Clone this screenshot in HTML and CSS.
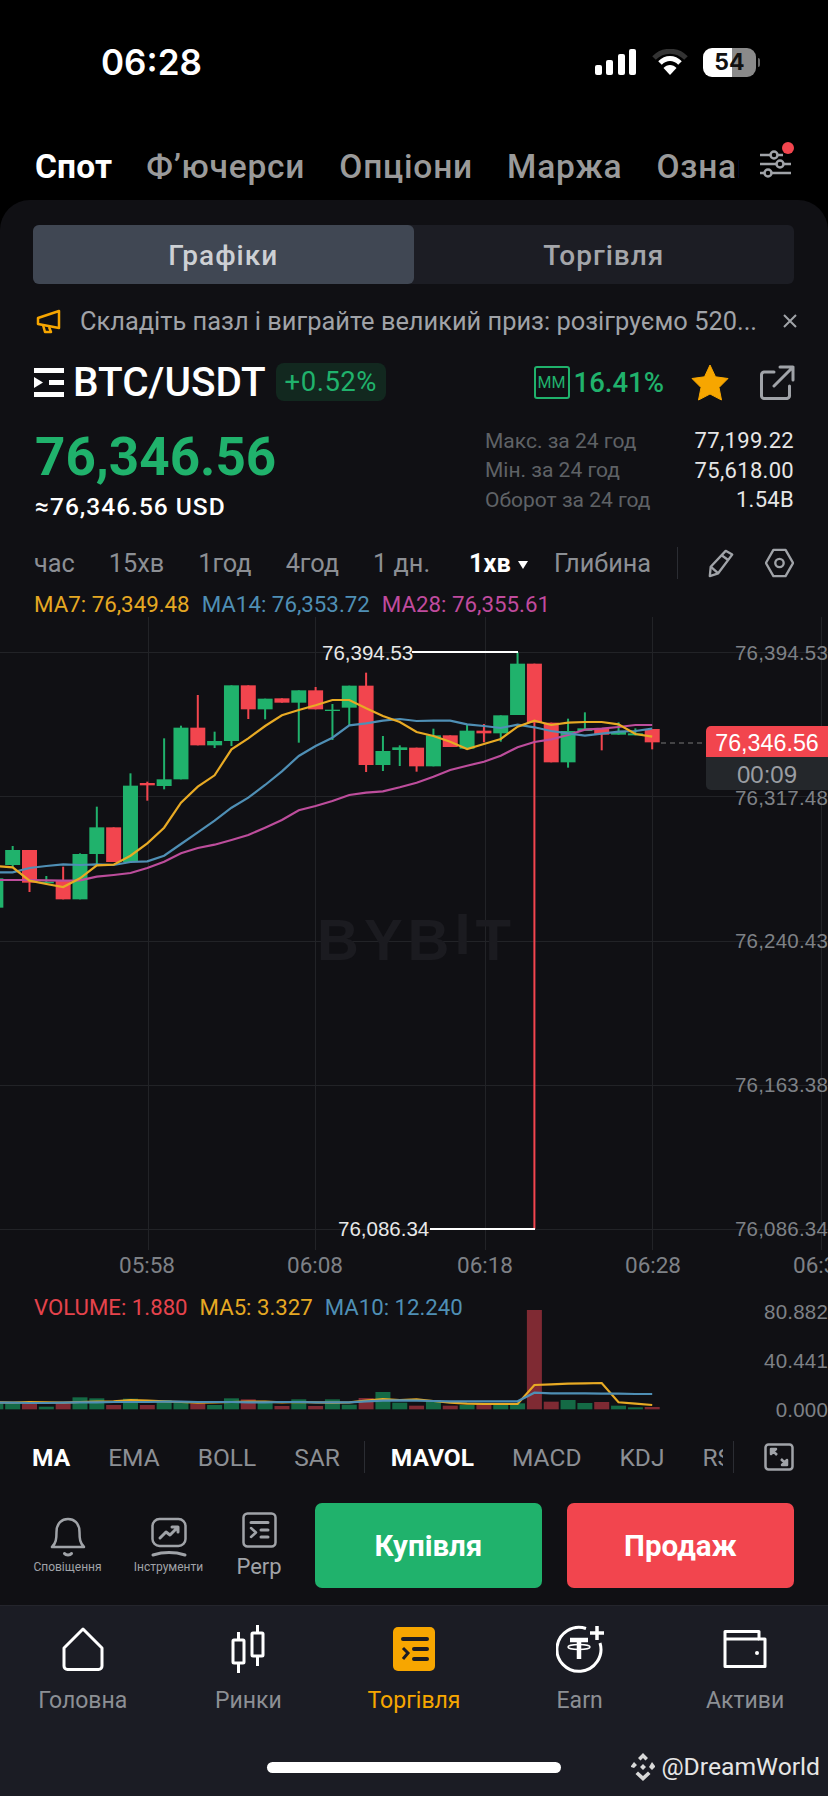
FILE: index.html
```html
<!DOCTYPE html>
<html lang="uk">
  <head>
    <meta charset="UTF-8" />
    <title>BTC/USDT</title>
    <link rel="stylesheet" href="styles.css">
  </head>
  <body>
    <div class="status-bar">
      <span class="clock">06:28</span>
      <div class="status-icons">
        <svg width="42" height="26" viewBox="0 0 42 26" fill="#fff"><rect x="0" y="16" width="7" height="10" rx="2"/><rect x="11" y="11" width="7" height="15" rx="2"/><rect x="23" y="5" width="7" height="21" rx="2"/><rect x="34" y="0" width="7" height="26" rx="2"/></svg>
        <svg width="36" height="26" viewBox="0 0 36 26"><path d="M2 9C11 0 25 0 34 9" fill="none" stroke="#333" stroke-width="5"/><path d="M8 14C14 8 22 8 28 14" fill="none" stroke="#fff" stroke-width="5"/><path d="M18 26L11.500 19C15 15 21 15 24.500 19Z" fill="#fff"/></svg>
        <div class="battery"><span class="battery-num">54</span></div>
      </div>
    </div>

    <div class="top-tabs">
      <div class="top-tabs-list">
        <span class="top-tab active">Спот</span>
        <span class="top-tab">Ф’ючерси</span>
        <span class="top-tab">Опціони</span>
        <span class="top-tab">Маржа</span>
        <span class="top-tab">Ознайомитись</span>
      </div>
      <div class="filter-btn">
        <svg width="33" height="30" viewBox="0 0 33 30" fill="none" stroke="#a0a3a8" stroke-width="2.500"><path d="M1 7H11M19 7H24M1 16H17M25 16H32M1 25H5M13 25H32"/><circle cx="15" cy="7" r="3.500"/><circle cx="21" cy="16" r="3.500"/><circle cx="9" cy="25" r="3.500"/></svg>
        <span class="filter-dot"></span>
      </div>
    </div>

    <div class="panel">
      <div class="segment">
        <div class="segment-item active">Графіки</div>
        <div class="segment-item">Торгівля</div>
      </div>

      <div class="notice">
        <svg width="26" height="25" viewBox="0 0 26 25" fill="none" stroke="#f7a600" stroke-width="2.500" stroke-linejoin="round"><path d="M2 9L23 2V19L2 15Z"/><path d="M7 16L9 23H15L13 18"/></svg>
        <span class="notice-text">Складіть пазл і виграйте великий приз: розігруємо 520...</span>
        <svg class="notice-close" width="14" height="14" viewBox="0 0 14 14" stroke="#a0a3a8" stroke-width="2"><path d="M1 1L13 13M13 1L1 13"/></svg>
      </div>

      <div class="symbol-row">
        <svg width="30" height="29" viewBox="0 0 30 29" fill="#fff"><rect width="30" height="5"/><rect y="24" width="30" height="5"/><rect x="15" y="12" width="15" height="5"/><path d="M0 9L9 14.500L0 20Z"/></svg>
        <span class="symbol-name">BTC/USDT</span>
        <span class="change-badge">+0.52%</span>
        <span class="mm-box">MM</span>
        <span class="mm-value">16.41%</span>
        <svg class="star" width="38" height="37" viewBox="0 0 38 37"><path d="M19 1L24.500 12.800L37 14.500L28 23.500L30.500 36L19 30L7.500 36L10 23.500L1 14.500L13.500 12.800Z" fill="#f7a600" stroke="#f7a600" stroke-linejoin="round"/></svg>
        <svg width="35" height="35" viewBox="0 0 35 35" fill="none" stroke="#a0a3a8" stroke-width="3" stroke-linecap="round" stroke-linejoin="round"><path d="M14 7H4A3 3 0 0 0 1.500 10V30A3 3 0 0 0 4 33.500H26A3 3 0 0 0 29.500 30V21"/><path d="M14 21L33 2M20 2H33V15"/></svg>
      </div>

      <div class="price-row">
        <div>
          <div class="price">76,346.56</div>
          <div class="price-usd">≈76,346.56 USD</div>
        </div>
        <div class="stats">
          <div class="stat"><span class="stat-label">Макс. за 24 год</span><span class="stat-value">77,199.22</span></div>
          <div class="stat"><span class="stat-label">Мін. за 24 год</span><span class="stat-value">75,618.00</span></div>
          <div class="stat"><span class="stat-label">Оборот за 24 год</span><span class="stat-value">1.54B</span></div>
        </div>
      </div>

      <div class="time-tabs">
        <span class="time-tab">час</span>
        <span class="time-tab">15хв</span>
        <span class="time-tab">1год</span>
        <span class="time-tab">4год</span>
        <span class="time-tab">1 дн.</span>
        <span class="time-tab active">1хв <i class="caret"></i></span>
        <span class="time-tab">Глибина</span>
        <span class="divider"></span>
        <svg width="30" height="32" viewBox="0 0 30 32" fill="none" stroke="#a0a3a8" stroke-width="2.500" stroke-linejoin="round"><path d="M20 3L27 7L12 27L3 30L4 20Z"/><path d="M16 8L23 13M4 20L12 27"/></svg>
        <svg class="hex" width="31" height="32" viewBox="0 0 31 32" fill="none" stroke="#a0a3a8" stroke-width="2.500" stroke-linejoin="round"><path d="M9 2H22L30 16L22 30H9L1 16Z"/><circle cx="15.500" cy="16" r="4.500"/></svg>
      </div>

      <div class="ma-legend">
        <span class="ma-yellow">MA7: 76,349.48</span>
        <span class="ma-blue">MA14: 76,353.72</span>
        <span class="ma-pink">MA28: 76,355.61</span>
      </div>

      <svg class="chart" id="chart" width="828" height="809" viewBox="0 0 828 809">
        <g id="grid"></g>
        <text class="watermark" x="317" y="343">BYB<tspan dy="-6">I</tspan><tspan dy="6">T</tspan></text>
        <g id="candles"></g>
        <g id="lines"></g>

        <text class="axis" x="828" y="43" text-anchor="end">76,394.53</text>
        <text class="axis" x="828" y="188" text-anchor="end">76,317.48</text>
        <text class="axis" x="828" y="331" text-anchor="end">76,240.43</text>
        <text class="axis" x="828" y="475" text-anchor="end">76,163.38</text>
        <text class="axis" x="828" y="619" text-anchor="end">76,086.34</text>

        <text class="peak" x="322" y="43">76,394.53</text>
        <rect x="412" y="34" width="106" height="2" fill="#fff"/>
        <text class="peak" x="338" y="619">76,086.34</text>
        <rect x="430" y="611" width="105" height="2" fill="#fff"/>

        <path d="M661 126H706" stroke="#777" stroke-dasharray="5 4"/>
        <path d="M706 114H828V140H706Z" fill="#f2454e"/>
        <rect x="706" y="109" width="130" height="32" rx="5" fill="#f2454e"/>
        <path d="M706 140H828V173H711A5 5 0 0 1 706 168Z" fill="#24272b"/>
        <text class="tag" x="767" y="134" text-anchor="middle">76,346.56</text>
        <text class="tag-time" x="767" y="166" text-anchor="middle">00:09</text>

        <text class="time-label" x="147" y="656" text-anchor="middle">05:58</text>
        <text class="time-label" x="315" y="656" text-anchor="middle">06:08</text>
        <text class="time-label" x="485" y="656" text-anchor="middle">06:18</text>
        <text class="time-label" x="653" y="656" text-anchor="middle">06:28</text>
        <text class="time-label" x="821" y="656" text-anchor="middle">06:38</text>

        <text class="vol-legend" x="34" y="698"><tspan fill="#e5434c">VOLUME: 1.880</tspan><tspan dx="12" fill="#e5a823">MA5: 3.327</tspan><tspan dx="12" fill="#4f8fb5">MA10: 12.240</tspan></text>
        <text class="axis" x="828" y="702" text-anchor="end">80.882</text>
        <text class="axis" x="828" y="751" text-anchor="end">40.441</text>
        <text class="axis" x="828" y="800" text-anchor="end">0.000</text>
      </svg>

      <div class="indicators">
        <div class="ind-group">
          <span class="ind active">MA</span>
          <span class="ind">EMA</span>
          <span class="ind">BOLL</span>
          <span class="ind">SAR</span>
        </div>
        <span class="divider"></span>
        <div class="ind-group ind-scroll">
          <span class="ind active">MAVOL</span>
          <span class="ind">MACD</span>
          <span class="ind">KDJ</span>
          <span class="ind">RSI</span>
        </div>
        <span class="divider"></span>
        <svg class="expand" width="30" height="28" viewBox="0 0 30 28" fill="none" stroke="#a0a3a8" stroke-width="2.500" stroke-linejoin="round"><rect x="1.500" y="1.500" width="27" height="25" rx="3"/><path d="M7 6H12L7 11ZM7 6L13 12M23 22H18L23 17ZM23 22L17 16"/></svg>
      </div>

      <div class="actions">
        <div class="action">
          <svg width="36" height="40" viewBox="0 0 36 40" fill="none" stroke="#a0a3a8" stroke-width="2.500" stroke-linecap="round" stroke-linejoin="round"><path d="M2 30H34C30 26 29.500 22 29.500 15C29.500 6 24 2 18 2S6.500 6 6.500 15C6.500 22 6 26 2 30Z"/><path d="M14.500 36.500C16 38.500 20 38.500 21.500 36.500" stroke-width="3"/></svg>
          <span class="action-label">Сповіщення</span>
        </div>
        <div class="action">
          <svg width="36" height="40" viewBox="0 0 36 40" fill="none" stroke="#a0a3a8" stroke-width="2.500" stroke-linecap="round" stroke-linejoin="round"><rect x="1.500" y="2" width="33" height="27" rx="7"/><path d="M9 21L15 15L19 18L26 11M21 10H27V15" stroke-width="3"/><path d="M2 38C12 35 24 35 34 38" stroke-width="3"/></svg>
          <span class="action-label">Інструменти</span>
        </div>
        <div class="action action-perp">
          <svg width="35" height="36" viewBox="0 0 35 36" fill="none" stroke="#a0a3a8" stroke-width="2.500" stroke-linecap="round" stroke-linejoin="round"><rect x="1.500" y="1.500" width="32" height="33" rx="4"/><path d="M9 10.500H26M19 18H26M19 25H26" stroke-width="3"/><path d="M9 16L14 20.500L9 25" stroke-width="2.500"/></svg>
          <span class="perp-label">Perp</span>
        </div>
        <div class="trade-btn buy">Купівля</div>
        <div class="trade-btn sell">Продаж</div>
      </div>
    </div>

    <nav class="bottom-nav">
      <div class="nav-item">
        <svg width="44" height="46" viewBox="0 0 44 46" fill="none" stroke="#fff" stroke-width="3" stroke-linejoin="round"><path d="M22 3L41 22V40A3.500 3.500 0 0 1 37.500 43.500H6.500A3.500 3.500 0 0 1 3 40V22Z"/></svg>
        <span>Головна</span>
      </div>
      <div class="nav-item">
        <svg width="44" height="50" viewBox="0 0 34 50" fill="none" stroke="#fff" stroke-width="3" stroke-linejoin="round"><rect x="2" y="16" width="11" height="23" rx="1"/><rect x="21" y="9" width="11" height="23" rx="1"/><path d="M7.500 8V16M7.500 39V49M26.500 1V9M26.500 32V42"/></svg>
        <span>Ринки</span>
      </div>
      <div class="nav-item active">
        <svg width="42" height="44" viewBox="0 0 42 44"><rect width="42" height="44" rx="5" fill="#f7a600"/><path d="M10 12H34M21 22H34M21 32H34" stroke="#1b1c24" stroke-width="4" stroke-linecap="round"/><path d="M10 21L15 26L10 32" fill="none" stroke="#1b1c24" stroke-width="3"/></svg>
        <span>Торгівля</span>
      </div>
      <div class="nav-item">
        <svg width="48" height="48" viewBox="0 0 48 48" fill="none" stroke="#fff" stroke-width="3"><path d="M30 3.500A22 22 0 1 0 44 18"/><path d="M14 15H32M23 15V34" stroke-width="4.500"/><ellipse cx="23" cy="22" rx="11" ry="2.500" stroke-width="1.500"/><path d="M41 1V15M34 8H48" stroke-width="3.500"/></svg>
        <span>Earn</span>
      </div>
      <div class="nav-item">
        <svg width="44" height="40" viewBox="0 0 44 40" fill="none" stroke="#fff" stroke-width="3" stroke-linejoin="round"><path d="M2 10V37.500H42V10H36V2.500H2Z"/><path d="M2 10H36"/><circle cx="34" cy="24" r="2" fill="#fff" stroke="none"/></svg>
        <span>Активи</span>
      </div>
    </nav>

    <div class="home-area">
      <div class="home-indicator"></div>
      <div class="credit">
        <svg width="28" height="28" viewBox="0 0 28 28" fill="#d8d8d8"><path d="M14 0L19 5L16.500 7.500L14 5L11.500 7.500L9 5ZM5 9L8 12L5 15L2 14V13ZM23 9L26 13V14L23 17L20 14ZM14 11L17 14L14 17L11 14ZM9 18.500L14 23L19 18.500L21.500 21L14 28L6.500 21Z"/></svg>
        <span>@DreamWorld</span>
      </div>
    </div>

    <script src="chart.js"></script>
  </body>
</html>
```

FILE: styles.css
```css
* {
  box-sizing: border-box;
}
html,
body {
  margin: 0;
  background: #000;
}
body {
  width: 828px;
  height: 1796px;
  overflow: hidden;
  font-family: Roboto, "Noto Sans", sans-serif;
  color: #fff;
  display: flex;
  flex-direction: column;
}

/* status bar */
.status-bar {
  height: 124px;
  display: flex;
  justify-content: space-between;
  align-items: center;
  padding: 0 72px 0 101px;
}
.clock {
  font-family: Inter, sans-serif;
  font-size: 35px;
  font-weight: 600;
}
.status-icons {
  display: flex;
  align-items: center;
  gap: 15px;
}
.battery {
  width: 53px;
  height: 29px;
  border-radius: 9px;
  background: linear-gradient(to right, #fff 54%, #8a8a8a 54%);
  color: #111;
  text-align: center;
  font-family: Inter, sans-serif;
  font-weight: 700;
  font-size: 23px;
  line-height: 29px;
  position: relative;
}
.battery::after {
  content: "";
  position: absolute;
  right: -4px;
  top: 10px;
  width: 2px;
  height: 9px;
  border-radius: 0 2px 2px 0;
  background: #666;
}

/* top tabs */
.top-tabs {
  height: 76px;
  display: flex;
  align-items: center;
  padding: 8px 36px 0 35px;
}
.top-tabs-list {
  width: 705px;
  display: flex;
  gap: 34px;
  overflow: hidden;
}
.top-tab {
  font-size: 33.500px;
  letter-spacing: 0.800px;
  font-weight: 500;
  color: #9a9a9a;
  white-space: nowrap;
}
.top-tab.active {
  color: #fff;
  font-weight: 700;
  letter-spacing: 0.200px;
}
.filter-btn {
  margin: -6px 0 0 20px;
  position: relative;
  height: 30px;
}
.filter-dot {
  position: absolute;
  top: -6px;
  right: -2px;
  width: 12px;
  height: 12px;
  border-radius: 50%;
  background: #f2454e;
}

/* panel */
.panel {
  height: 1405px;
  background: #101014;
  border-radius: 30px 30px 0 0;
  padding-top: 25px;
}
.segment {
  height: 59px;
  margin: 0 34px 0 33px;
  display: flex;
  background: #1c1d24;
  border-radius: 6px;
}
.segment-item {
  flex: 1;
  display: flex;
  align-items: center;
  justify-content: center;
  padding-top: 2px;
  font-size: 28px;
  letter-spacing: 1px;
  font-weight: 500;
  color: #a4a6aa;
  border-radius: 6px;
}
.segment-item.active {
  background: #404753;
  color: #cdd0d4;
}
.notice {
  height: 74px;
  padding: 0 31px 0 36px;
  display: flex;
  align-items: center;
}
.notice-text {
  margin-left: 18px;
  font-size: 25.400px;
  color: #a0a3a8;
  white-space: nowrap;
}
.notice-close {
  margin-left: auto;
}
.symbol-row {
  height: 48px;
  padding: 0 33px 0 34px;
  display: flex;
  align-items: center;
}
.symbol-name {
  margin-left: 9px;
  font-size: 40.500px;
  font-weight: 500;
}
.change-badge {
  margin-left: 10px;
  height: 38px;
  padding: 0 9px;
  border-radius: 8px;
  background: #12281f;
  color: #20b26c;
  font-size: 27.500px;
  letter-spacing: 0.500px;
  line-height: 38px;
}
.mm-box {
  margin-left: auto;
  width: 36px;
  height: 33px;
  border: 2px solid #20b26c;
  border-radius: 3px;
  color: #20b26c;
  font-size: 16px;
  text-align: center;
  line-height: 29px;
}
.mm-value {
  margin-left: 4px;
  color: #20b26c;
  font-size: 27.500px;
  font-weight: 500;
}
.star {
  margin-left: 27px;
  margin-right: 31px;
}
.price-row {
  height: 132px;
  padding: 20px 34px 0 35px;
  display: flex;
  justify-content: space-between;
}
.price {
  color: #20b26c;
  font-size: 53px;
  font-weight: 700;
  line-height: 62px;
}
.price-usd {
  margin-top: 4px;
  font-size: 24.500px;
  letter-spacing: 1px;
  font-weight: 500;
}
.stats {
  width: 309px;
  font-size: 21px;
  color: #e6e6e6;
}
.stat {
  height: 29.500px;
  display: flex;
  justify-content: space-between;
  align-items: center;
}
.stat-label {
  color: #5f6266;
}
.stat-value {
  font-size: 22px;
  letter-spacing: 0.300px;
}
.time-tabs {
  height: 50px;
  padding: 0 34px;
  display: flex;
  align-items: center;
  gap: 34px;
}
.time-tab {
  font-size: 25.300px;
  color: #8c8f94;
  white-space: nowrap;
}
.time-tab.active {
  margin: 0 -8px 0 5px;
  color: #fff;
  font-weight: 700;
}
.caret {
  display: inline-block;
  margin-left: 1px;
  vertical-align: 3px;
  border: 5.500px solid transparent;
  border-top: 8px solid #fff;
  border-bottom: 0;
}
.divider {
  width: 1px;
  height: 32px;
  background: #2b2d33;
}
.time-tabs .divider {
  margin: 0 -5px 0 -8px;
}
.hex {
  margin-left: -4px;
}
.ma-legend {
  height: 29px;
  padding: 3px 0 0 34px;
  display: flex;
  gap: 12px;
  align-items: center;
  font-size: 22.300px;
}
.ma-yellow {
  color: #e5a823;
}
.ma-blue {
  color: #4f8fb5;
}
.ma-pink {
  color: #c04b9e;
}

/* chart */
.chart {
  display: block;
}
.chart text {
  font-family: "Liberation Sans", sans-serif;
}
.chart .axis {
  font-size: 20.500px;
  letter-spacing: 0.200px;
  fill: #7e8186;
}
.chart .peak {
  font-size: 20.500px;
  fill: #e8e8e8;
}
.chart .time-label {
  font-family: Roboto, sans-serif;
  font-size: 22.500px;
  fill: #7e8186;
}
.chart .tag {
  font-size: 23.300px;
  fill: #fff;
}
.chart .tag-time {
  font-size: 24px;
  fill: #9a9da2;
}
.chart .watermark {
  font-size: 58px;
  font-weight: 700;
  letter-spacing: 5px;
  fill: #1b1b20;
}
.chart .vol-legend {
  font-family: Roboto, sans-serif;
  font-size: 22.200px;
}

/* indicators */
.indicators {
  height: 62px;
  padding-left: 32px;
  display: flex;
  align-items: center;
}
.ind-group {
  display: flex;
  gap: 38px;
  margin-right: 24px;
}
.ind-scroll {
  width: 332px;
  margin: 0 10px 0 26px;
  overflow: hidden;
}
.ind {
  font-size: 24.500px;
  color: #8c8f94;
}
.ind.active {
  color: #fff;
  font-weight: 700;
}
.expand {
  margin-left: 30px;
}

/* actions */
.actions {
  height: 115px;
  padding: 15px 34px 15px 0;
  display: flex;
  align-items: center;
}
.action {
  width: 101px;
  display: flex;
  flex-direction: column;
  align-items: center;
  gap: 3px;
}
.action-label {
  font-size: 12px;
  color: #a0a3a8;
  white-space: nowrap;
}
.action:first-child {
  margin-left: 17px;
}
.action-perp {
  width: 80px;
  gap: 6px;
}
.perp-label {
  font-size: 22px;
  color: #a0a3a8;
}
.trade-btn {
  width: 227px;
  height: 85px;
  border-radius: 7px;
  display: flex;
  align-items: center;
  justify-content: center;
  font-size: 29.500px;
  font-weight: 700;
}
.buy {
  background: #20b26c;
  margin-left: 16px;
}
.sell {
  background: #f2454e;
  margin-left: 25px;
}

/* bottom nav */
.bottom-nav {
  height: 135px;
  background: #1b1c24;
  border-top: 1px solid #24252c;
  padding-top: 18px;
  display: grid;
  grid-template-columns: repeat(5, 1fr);
}
.nav-item {
  display: flex;
  flex-direction: column;
  align-items: center;
  font-size: 23px;
  color: #8c8f94;
}
.nav-item svg {
  height: 50px;
  margin-bottom: 13px;
}
.nav-item.active {
  color: #f7a600;
}
.home-area {
  height: 56px;
  background: #1b1c24;
  position: relative;
}
.home-indicator {
  position: absolute;
  left: 267px;
  top: 22px;
  width: 294px;
  height: 11px;
  border-radius: 6px;
  background: #fff;
}
.credit {
  position: absolute;
  right: 8px;
  top: 12px;
  display: flex;
  align-items: center;
  gap: 4px;
  font-size: 24.700px;
  color: #e6e6e6;
}
```

FILE: chart.js
```js
// values are read off the screen: y is in px *3 from the top of the plot area
const SVG_NS = "http://www.w3.org/2000/svg";
const STEP = 16.83;
const X0 = 12.67;
const GREEN = "#20b26c";
const RED = "#f2454e";

// [colour, body top, body bottom, wick top, wick bottom]
const candles = [
  ["g", 745, 833, 745, 833],
  ["g", 660, 705, 648, 712],
  ["r", 660, 758, 660, 786],
  ["g", 755, 760, 738, 760],
  ["r", 750, 808, 710, 808],
  ["g", 672, 808, 670, 808],
  ["g", 592, 672, 530, 705],
  ["r", 592, 696, 592, 696],
  ["g", 467, 696, 430, 696],
  ["r", 459, 466, 455, 512],
  ["g", 448, 468, 325, 478],
  ["g", 293, 448, 287, 448],
  ["r", 293, 346, 195, 346],
  ["g", 333, 346, 305, 354],
  ["g", 166, 333, 166, 348],
  ["r", 166, 238, 166, 267],
  ["g", 206, 238, 206, 268],
  ["r", 205, 218, 205, 218],
  ["g", 181, 218, 181, 338],
  ["r", 181, 238, 171, 238],
  ["g", 239, 243, 222, 330],
  ["g", 167, 233, 167, 285],
  ["r", 167, 405, 128, 426],
  ["g", 363, 405, 318, 423],
  ["g", 352, 360, 346, 408],
  ["r", 353, 409, 353, 425],
  ["g", 316, 409, 296, 409],
  ["r", 316, 351, 316, 351],
  ["g", 302, 356, 285, 356],
  ["r", 302, 310, 282, 337],
  ["g", 256, 310, 256, 335],
  ["g", 101, 255, 67, 255],
  ["r", 101, 278, 101, 1797],
  ["r", 278, 397, 278, 397],
  ["g", 303, 397, 266, 413],
  ["g", 295, 303, 247, 303],
  ["r", 296, 314, 296, 361],
  ["g", 306, 314, 277, 314],
  ["g", 310, 316, 295, 316],
  ["r", 297, 337, 297, 358],
];

const ma7 = [708, 712, 752, 762, 771, 745, 706, 704, 677, 640, 593, 518, 470, 436, 358, 325, 288, 256, 240, 226, 210, 210, 235, 258, 276, 306, 318, 335, 357, 342, 327, 290, 272, 285, 278, 276, 276, 283, 312, 320];
const ma14 = [727, 727, 714, 708, 703, 705, 703, 705, 696, 694, 677, 642, 607, 572, 533, 503, 465, 424, 378, 348, 323, 286, 280, 272, 267, 273, 272, 272, 283, 288, 294, 284, 292, 303, 310, 317, 311, 305, 303, 296];
const ma28 = [750, 750, 750, 751, 752, 751, 740, 735, 729, 714, 695, 670, 654, 644, 630, 615, 593, 570, 541, 528, 513, 495, 488, 484, 472, 458, 440, 420, 407, 395, 377, 352, 336, 328, 315, 299, 296, 291, 285, 285];

// [colour, top of bar], same index as candles, y is px *3 from 1240
const volumes = [
  ["g", 490], ["g", 490], ["r", 490], ["g", 500], ["r", 490], ["g", 472], ["g", 475], ["r", 495],
  ["g", 476], ["r", 495], ["g", 480], ["g", 485], ["r", 490], ["g", 495], ["g", 475], ["r", 478],
  ["g", 485], ["r", 498], ["g", 478], ["r", 498], ["g", 478], ["g", 494], ["r", 474], ["g", 456],
  ["g", 488], ["r", 497], ["g", 480], ["r", 497], ["g", 495], ["r", 490], ["g", 490], ["g", 490],
  ["r", 210], ["r", 485], ["g", 480], ["g", 489], ["r", 486], ["g", 497], ["g", 502], ["r", 501],
];
const vol5 = [487, 488, 486, 487, 488, 486, 485, 484, 480, 482, 484, 486, 488, 487, 486, 485, 485, 487, 486, 487, 488, 487, 482, 477, 480, 478, 483, 488, 491, 492, 492, 492, 435, 433, 431, 430, 429, 487, 491, 495];
const vol10 = [488, 488, 489, 489, 488, 487, 487, 486, 486, 486, 485, 485, 486, 486, 486, 487, 487, 486, 486, 487, 487, 487, 484, 482, 481, 482, 483, 484, 484, 484, 484, 484, 458, 460, 460, 460, 461, 461, 462, 462];

const chartY = (v) => v / 3 + 13; // plot area starts at 617, zoomed values at 630
const volY = (v) => v / 3 + 623;
const candleX = (i) => X0 + STEP * (i - 1);

function add(parent, tag, attrs) {
  const el = document.createElementNS(SVG_NS, tag);
  Object.keys(attrs).forEach((k) => el.setAttribute(k, attrs[k]));
  parent.appendChild(el);
}

function drawGrid() {
  const grid = document.getElementById("grid");
  [35, 179, 324, 468, 612].forEach((y) => {
    add(grid, "rect", { x: 0, y: y, width: 828, height: 1, fill: "#222327" });
  });
  [148, 315, 485, 652, 821].forEach((x) => {
    add(grid, "rect", { x: x, y: 0, width: 1, height: 633, fill: "#222327" });
  });
}

function drawCandles() {
  const group = document.getElementById("candles");
  candles.forEach((c, i) => {
    const x = candleX(i);
    const fill = c[0] === "g" ? GREEN : RED;
    add(group, "rect", {
      x: x - 1,
      y: chartY(c[3]),
      width: 2,
      height: (c[4] - c[3]) / 3,
      fill: fill,
    });
    add(group, "rect", {
      x: x - 7.5,
      y: chartY(c[1]),
      width: 15,
      height: (c[2] - c[1]) / 3,
      fill: fill,
    });
  });
  volumes.forEach((v, i) => {
    add(group, "rect", {
      x: candleX(i) - 7.5,
      y: volY(v[1]),
      width: 15,
      height: (508 - v[1]) / 3,
      fill: v[0] === "g" ? "#146a45" : "#7f2a33",
    });
  });
}

function drawLine(values, toY, colour, width) {
  const points = values.map((v, i) => `${candleX(i).toFixed(1)},${toY(v).toFixed(1)}`);
  add(document.getElementById("lines"), "polyline", {
    points: points.join(" "),
    fill: "none",
    stroke: colour,
    "stroke-width": width,
  });
}

drawGrid();
drawCandles();
drawLine(ma28, chartY, "#bd4d9c", 2.2);
drawLine(ma14, chartY, "#4f8fb5", 2.2);
drawLine(ma7, chartY, "#e8aa24", 2.2);
drawLine(vol5, volY, "#e8aa24", 2.2);
drawLine(vol10, volY, "#4f8fb5", 2.2);
```
